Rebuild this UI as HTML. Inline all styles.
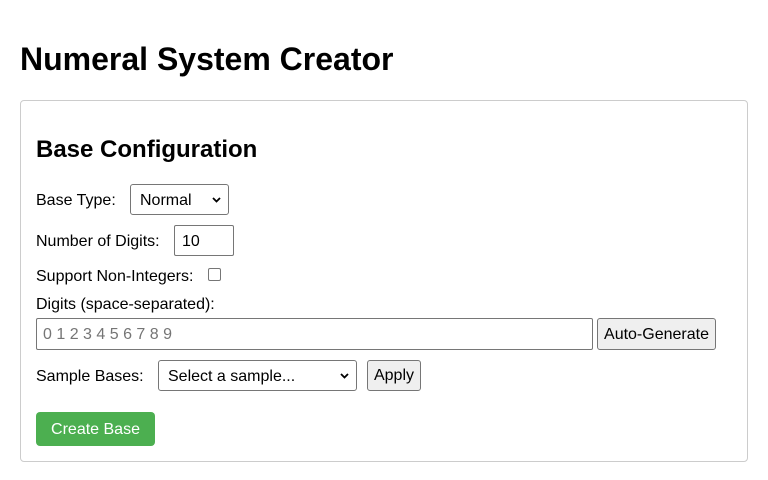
<!DOCTYPE html>
<html><head><style>
*{box-sizing:border-box;margin:0;padding:0}
body{width:768px;height:480px;background:#fff;font-family:"Liberation Sans",sans-serif;font-size:16px;color:#000;position:relative;overflow:hidden}
.a{position:absolute}
h1{position:absolute;left:20px;top:39px;font-size:32px;font-weight:bold;line-height:40px}
.box{position:absolute;left:20px;top:100px;width:728px;height:362px;border:1px solid #ccc;border-radius:4px}
h2{position:absolute;left:36px;top:135px;font-size:24px;font-weight:bold;line-height:30px}
.l{position:absolute;left:36px;line-height:18px}
.f{position:absolute;border:1px solid #767676;border-radius:2px;background:#fff;line-height:18px;padding-left:9px}
.sel{border-radius:3px}
.b{position:absolute;border:1px solid #767676;border-radius:3px;background:#efefef;text-align:center}
.chev{position:absolute;right:7px;top:50%;margin-top:-3px}
</style></head><body>
<h1>Numeral System Creator</h1>
<div class="box"></div>
<h2>Base Configuration</h2>
<div class="l" style="top:192px">Base Type:</div>
<div class="f sel" style="left:130px;top:184px;width:99px;height:31px;padding-top:7px">Normal
<svg class="chev" width="9" height="6" viewBox="0 0 9 6"><path d="M1 1L4.5 4.5L8 1" stroke="#000" stroke-width="1.8" fill="none"/></svg></div>
<div class="l" style="top:233px">Number of Digits:</div>
<div class="f" style="left:174px;top:225px;width:60px;height:31px;padding-top:7px;padding-left:7px">10</div>
<div class="l" style="top:268px">Support Non-Integers:</div>
<div class="a" style="left:208px;top:268px;width:13px;height:13px;border:1px solid #767676;border-radius:2px"></div>
<div class="l" style="top:296px">Digits (space-separated):</div>
<div class="f" style="left:36px;top:318px;width:557px;height:32px;padding-top:7px;padding-left:6px;color:#757575">0 1 2 3 4 5 6 7 8 9</div>
<div class="b" style="left:597px;top:318px;width:119px;height:32px;line-height:31px">Auto-Generate</div>
<div class="l" style="top:368px">Sample Bases:</div>
<div class="f sel" style="left:158px;top:360px;width:199px;height:31px;padding-top:7px">Select a sample...
<svg class="chev" width="9" height="6" viewBox="0 0 9 6"><path d="M1 1L4.5 4.5L8 1" stroke="#000" stroke-width="1.8" fill="none"/></svg></div>
<div class="b" style="left:367px;top:360px;width:54px;height:31px;line-height:30px">Apply</div>
<div class="a" style="left:36px;top:412px;width:119px;height:34px;background:#4caf50;color:#fff;border-radius:4px;text-align:center;line-height:35px">Create Base</div>
</body></html>
